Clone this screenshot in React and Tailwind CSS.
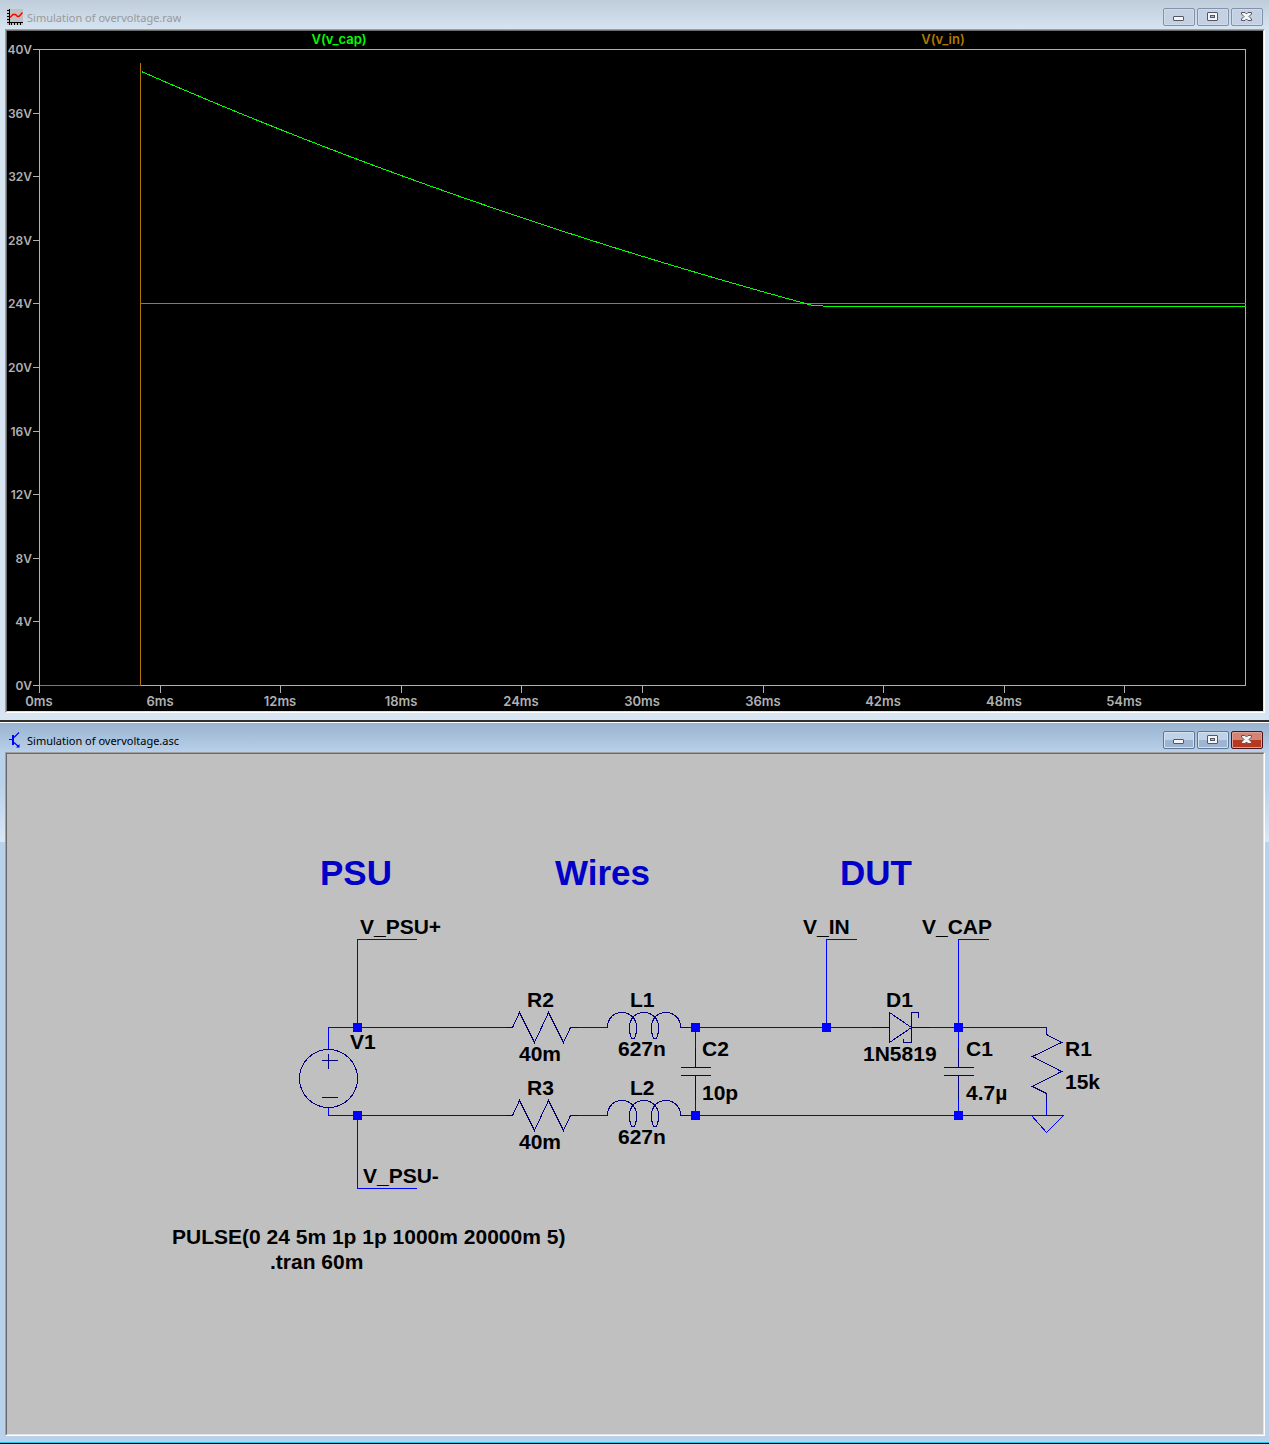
import React from 'react';

const Y_TICKS = [40, 36, 32, 28, 24, 20, 16, 12, 8, 4, 0];
const X_TICKS = [0, 6, 12, 18, 24, 30, 36, 42, 48, 54];

// plot area, in view box units
const PLOT = { left: 32, right: 1238, top: 18, bottom: 654 };

const toX = (ms) => PLOT.left + (ms / 60) * (PLOT.right - PLOT.left);
const toY = (volts) => PLOT.bottom - (volts / 40) * (PLOT.bottom - PLOT.top);

// the capacitor discharges through R1 until the diode conducts again
const capTrace = Array.from({ length: 62 }, (_, i) => {
  const ms = 5.1 + i * 0.9;
  const volts = Math.max(38.6 * Math.exp(-(ms - 5.1) / 69.6), 23.84);
  return `${toX(ms)},${toY(volts)}`;
}).join(' ');

const JUNCTIONS = [
  [357, 1027],
  [357, 1115],
  [695, 1027],
  [695, 1115],
  [826, 1027],
  [958, 1027],
  [958, 1115],
];

const LABELS = [
  { x: 360, y: 934, text: 'V_PSU+' },
  { x: 363, y: 1183, text: 'V_PSU-' },
  { x: 350, y: 1049, text: 'V1' },
  { x: 527, y: 1007, text: 'R2' },
  { x: 519, y: 1061, text: '40m' },
  { x: 527, y: 1095, text: 'R3' },
  { x: 519, y: 1149, text: '40m' },
  { x: 630, y: 1007, text: 'L1' },
  { x: 618, y: 1056, text: '627n' },
  { x: 630, y: 1095, text: 'L2' },
  { x: 618, y: 1144, text: '627n' },
  { x: 702, y: 1056, text: 'C2' },
  { x: 702, y: 1100, text: '10p' },
  { x: 803, y: 934, text: 'V_IN' },
  { x: 922, y: 934, text: 'V_CAP' },
  { x: 886, y: 1007, text: 'D1' },
  { x: 863, y: 1061, text: '1N5819' },
  { x: 966, y: 1056, text: 'C1' },
  { x: 966, y: 1100, text: '4.7µ' },
  { x: 1065, y: 1056, text: 'R1' },
  { x: 1065, y: 1089, text: '15k' },
  { x: 172, y: 1244, text: 'PULSE(0 24 5m 1p 1p 1000m 20000m 5)' },
  { x: 270, y: 1269, text: '.tran 60m' },
];

const HEADINGS = [
  { x: 320, text: 'PSU' },
  { x: 555, text: 'Wires' },
  { x: 840, text: 'DUT' },
];

function WaveformIcon() {
  return (
    <svg className="h-4 w-4" viewBox="0 0 16 16" aria-hidden="true">
      <rect width="16" height="16" fill="#c0c0c0" />
      <g fill="#000" shapeRendering="crispEdges">
        <path d="M2 0h1v16h-1zM2 13h14v1h-14z" />
        <path d="M0 1h2v1h-2zM0 4h2v1h-2zM0 7h2v1h-2zM0 10h2v1h-2zM0 13h2v1h-2z" />
        <path d="M4 14h1v2h-1zM7 14h1v2h-1zM10 14h1v2h-1zM13 14h1v2h-1z" />
      </g>
      <path d="M3 8.500L6 5.500H8.500L10.500 7.500H12L15.500 3.500" fill="none" stroke="#f00" strokeWidth="1.500" />
    </svg>
  );
}

function TransistorIcon() {
  return (
    <svg className="h-4 w-4" viewBox="0 0 16 16" aria-hidden="true">
      <path d="M2 7h3v1h-3zM5 3h2v10h-2z" fill="#00f" shapeRendering="crispEdges" />
      <path d="M7 5.500L12 0.500M7 10.500L12 15" fill="none" stroke="#00f" strokeWidth="1.200" />
      <path d="M12.500 15.500V12L9 15.500z" fill="#00f" />
    </svg>
  );
}

function MinimizeIcon() {
  return (
    <svg className="h-3 w-3" viewBox="0 0 12 12" aria-hidden="true">
      <rect x="0.5" y="5.5" width="10" height="4" rx="0.5" fill="#f4f4f4" stroke="#535666" />
    </svg>
  );
}

function MaximizeIcon() {
  return (
    <svg className="h-3 w-3" viewBox="0 0 12 12" aria-hidden="true">
      <rect x="0.5" y="1.5" width="10" height="8" rx="0.5" fill="#f4f4f4" stroke="#535666" />
      <rect x="3.5" y="4.5" width="4" height="2" fill="#a9bdd6" stroke="#535666" />
    </svg>
  );
}

function CloseIcon() {
  return (
    <svg className="h-3 w-3" viewBox="0 0 12 12" aria-hidden="true">
      <path
        d="M0.500 1.500H4L5.500 3L7 1.500H10.500V3L8 5.500L10.500 8V9.500H7L5.500 8L4 9.500H0.500V8L3 5.500L0.500 3Z"
        fill="#f4f4f4"
        stroke="#535666"
        strokeLinejoin="round"
      />
    </svg>
  );
}

function CaptionButton({ label, className, children }) {
  return (
    <button
      type="button"
      aria-label={label}
      className={`flex h-[18px] w-8 items-center justify-center rounded-xs border inset-ring ${className}`}
    >
      {children}
    </button>
  );
}

function TitleBar({ icon, title, active }) {
  const plain = active
    ? 'border-[#5f7595] inset-ring-[#d3e1f1] bg-linear-to-b from-[#bfd2e8] from-50% to-[#9db5d1] to-50%'
    : 'border-[#8391ab] inset-ring-[#cfdbea] bg-[#c3d1e2]';
  const close = active
    ? 'border-[#4c1420] inset-ring-[#e0a096] bg-linear-to-b from-[#d58474] from-50% to-[#b5381f] to-50%'
    : plain;

  return (
    <header className="flex items-start gap-[2px] px-[6px] pt-2 pb-[3px]">
      <div className="flex min-w-0 flex-1 items-center gap-1 pl-px">
        {icon}
        <h2
          className={`truncate pt-px font-['Noto_Sans','Open_Sans',sans-serif] text-[11px] leading-[17px] ${
            active ? 'text-black' : 'text-[#999]'
          }`}
        >
          {title}
        </h2>
      </div>
      <CaptionButton label="Minimize" className={plain}>
        <MinimizeIcon />
      </CaptionButton>
      <CaptionButton label="Maximize" className={plain}>
        <MaximizeIcon />
      </CaptionButton>
      <CaptionButton label="Close" className={close}>
        <CloseIcon />
      </CaptionButton>
    </header>
  );
}

// sunken client area with the two-tone bevel
function ClientArea({ className, children }) {
  return (
    <div className="mr-1 ml-[5px] border border-t-[#a0a0a0] border-r-white border-b-white border-l-[#a0a0a0]">
      <div className={`border border-t-[#696969] border-r-[#e3e3e3] border-b-[#e3e3e3] border-l-[#696969] ${className}`}>
        {children}
      </div>
    </div>
  );
}

function WaveformPlot() {
  return (
    <svg
      className="block h-auto w-full font-[Inter,'Liberation_Sans',sans-serif] font-semibold"
      viewBox="0 0 1256 680"
      role="img"
      aria-label="Voltage over time"
    >
      <g transform="translate(0.5 0.5)" fill="none" shapeRendering="crispEdges">
        <g stroke="#b0b0b0">
          <path d="M32 18H1238V654H32Z" />
          {Y_TICKS.map((v) => (
            <path key={v} d={`M25 ${Math.round(toY(v))}H32`} />
          ))}
          {X_TICKS.map((ms) => (
            <path key={ms} d={`M${Math.round(toX(ms))} 654V661`} />
          ))}
        </g>
        <path d="M32 654H133V31M133 272H1238" stroke="#b07800" />
        <polyline points={capTrace} stroke="#00ff00" />
      </g>
      <g fill="#b0b0b0">
        {Y_TICKS.map((v) => (
          <text key={v} x="25" y={Math.round(toY(v)) + 5} textAnchor="end" className="text-[12px]">
            {v}V
          </text>
        ))}
        {X_TICKS.map((ms) => (
          <text key={ms} x={Math.round(toX(ms))} y="675" textAnchor="middle" className="text-[13px]">
            {ms}ms
          </text>
        ))}
      </g>
      <text x="332" y="13" textAnchor="middle" fill="#00ff00" className="text-[13px]">
        V(v_cap)
      </text>
      <text x="936" y="13" textAnchor="middle" fill="#b07800" className="text-[13px]">
        V(v_in)
      </text>
    </svg>
  );
}

function Resistor({ x, y }) {
  return <path transform={`translate(${x} ${y})`} d="M-7 0H0L7 -15L22 15L36 -15L51 15L58 0H65" />;
}

function Inductor({ x, y }) {
  return (
    <path
      transform={`translate(${x} ${y})`}
      d="M0 0C0 -20 29 -20 29 0C29 15 22 15 22 0C22 -20 51 -20 51 0C51 15 44 15 44 0C44 -20 73 -20 73 0H80"
    />
  );
}

function Capacitor({ x, y }) {
  return <path transform={`translate(${x} ${y})`} d="M0 -24V-4M-15 -4H15M-15 4H15M0 4V28" />;
}

function Schematic() {
  return (
    <svg
      className="block h-auto w-full font-['Liberation_Sans',Arial,sans-serif] font-bold"
      viewBox="7 754 1256 680"
      role="img"
      aria-label="Circuit schematic"
    >
      <g transform="translate(0.5 0.5)" fill="none" shapeRendering="crispEdges">
        <g stroke="#0000ff">
          <path d="M416 939H357V1027M328 1049V1027H511M571 1027H607M680 1027H889M911 1027H1046V1034" />
          <path d="M416 1188H357V1115M328 1107V1115H511M571 1115H607M680 1115H1063L1046 1132L1031 1115" />
          <path d="M856 939H826V1027M988 939H958V1067M958 1075V1115M695 1027V1067M695 1075V1115M1046 1093V1115" />
        </g>
        <g stroke="#000080">
          <circle cx="328" cy="1078" r="29" />
          <path d="M321 1060H337M328 1053V1068M321 1097H337" />
          <Resistor x={512} y={1027} />
          <Resistor x={512} y={1115} />
          <Inductor x={607} y={1027} />
          <Inductor x={607} y={1115} />
          <Capacitor x={695} y={1071} />
          <Capacitor x={958} y={1071} />
          <path d="M871 1027H889M889 1012V1042L911 1027L889 1012M911 1027H929" />
          <path d="M918 1017V1012H911V1042H903V1038" />
          <path d="M1046 1027V1034L1061 1042L1032 1056L1061 1071L1032 1086L1046 1093V1100" />
        </g>
      </g>
      {JUNCTIONS.map(([x, y]) => (
        <rect key={`${x}-${y}`} x={x - 4} y={y - 4} width="9" height="9" fill="#0000ff" />
      ))}
      {HEADINGS.map(({ x, text }) => (
        <text key={text} x={x} y="885" fill="#0000c8" className="text-[35px]">
          {text}
        </text>
      ))}
      {LABELS.map(({ x, y, text }) => (
        <text key={`${x}-${y}`} x={x} y={y} fill="#000" className="text-[21px]">
          {text}
        </text>
      ))}
    </svg>
  );
}

function App() {
  return (
    <main className="flex flex-col bg-[#d7e4f2]">
      <section className="bg-linear-to-b from-[#bfcddb] to-[#d7e4f2] to-[30px] pb-[7px]">
        <TitleBar icon={<WaveformIcon />} title="Simulation of overvoltage.raw" />
        <ClientArea className="bg-black">
          <WaveformPlot />
        </ClientArea>
      </section>

      <section className="border-t-2 border-b border-t-[#303030] border-b-black">
        <div className="border-t border-b border-t-white border-b-[#22c8e8] bg-[linear-gradient(#99b4d1,#b9d1ea_30px,#b9d1ea_60px,#dae7f5_119px,#b9d1ea_119px)] pb-[6px]">
          <TitleBar icon={<TransistorIcon />} title="Simulation of overvoltage.asc" active />
          <ClientArea className="bg-[#c0c0c0]">
            <Schematic />
          </ClientArea>
        </div>
      </section>
    </main>
  );
}

export default App;
